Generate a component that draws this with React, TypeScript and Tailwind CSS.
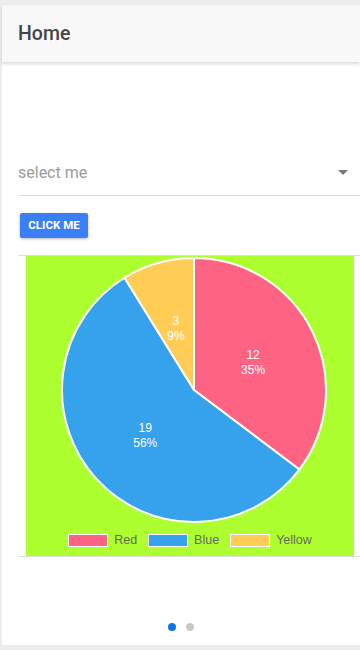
import React from "react";

const DATA = [
  { label: "Red", value: 12, color: "#ff6384" },
  { label: "Blue", value: 19, color: "#36a2eb" },
  { label: "Yellow", value: 3, color: "#ffcd56" },
];

const CX = 168;
const CY = 134;
const R = 132;

function pt(deg: number, r: number) {
  const a = (deg * Math.PI) / 180;
  return [CX + r * Math.sin(a), CY - r * Math.cos(a)];
}

function PieChart() {
  const total = DATA.reduce((s, d) => s + d.value, 0);
  let start = 0;
  const slices = DATA.map((d) => {
    const sweep = (d.value / total) * 360;
    const end = start + sweep;
    const [x1, y1] = pt(start, R);
    const [x2, y2] = pt(end, R);
    const [lx, ly] = pt(start + sweep / 2, R / 2);
    const large = sweep > 180 ? 1 : 0;
    const path = `M${CX} ${CY} L${x1} ${y1} A${R} ${R} 0 ${large} 1 ${x2} ${y2} Z`;
    start = end;
    return { ...d, path, lx, ly, pct: Math.round((d.value / total) * 100) };
  });

  return (
    <svg width="328" height="272" viewBox="0 0 328 272" className="block">
      {slices.map((s) => (
        <path key={s.label} d={s.path} fill={s.color} stroke="#fff" strokeWidth="2" strokeLinejoin="round" />
      ))}
      {slices.map((s) => (
        <g key={s.label + "t"} fill="#fff" fontSize="12" fontFamily="'Liberation Sans', Arial, sans-serif" textAnchor="middle">
          <text x={s.lx} y={s.ly - 2}>{s.value}</text>
          <text x={s.lx} y={s.ly + 13}>{s.pct}%</text>
        </g>
      ))}
    </svg>
  );
}

export default function App() {
  return (
    <div className="min-h-[650px] bg-[#ececec] pl-[2px] pt-[5px] pb-[5px] flex flex-col font-['Roboto',sans-serif]">
      <header className="h-[57px] bg-[#f8f8f8] shadow-[0_2px_3px_rgba(0,0,0,0.15)] flex items-center px-4 relative z-10">
        <h1 className="text-[19.5px] font-medium text-[#454545]">Home</h1>
      </header>

      <main className="flex-1 bg-white flex flex-col pl-4">
        <div className="mt-[88px] h-[46px] border-b border-[#dcdcdc] flex items-center justify-between pr-3">
          <span className="text-[16px] text-[#9a9a9a]">select me</span>
          <span className="w-0 h-0 border-l-[5px] border-r-[5px] border-t-[5px] border-l-transparent border-r-transparent border-t-[#777]" />
        </div>

        <button className="mt-[17px] ml-[2px] w-[68px] h-[25px] rounded-[2px] bg-[#3a7ff5] text-white text-[11.5px] font-bold uppercase shadow-[0_1px_3px_rgba(0,0,0,0.3)] self-start">
          Click me
        </button>

        <div className="mt-[17px] border-t border-b border-[#dedede] pl-2 pr-[6px]">
          <div className="bg-[#adff2f] h-[300px] flex flex-col">
            <PieChart />
            <div className="flex justify-center gap-[11px] mt-[6px] text-[12.5px] leading-[13px] text-[#666] font-['Liberation_Sans',Arial,sans-serif]">
              {DATA.map((d) => (
                <div key={d.label} className="flex items-center gap-[6px]">
                  <span className="w-[40px] h-[13px] border border-white" style={{ backgroundColor: d.color }} />
                  <span>{d.label}</span>
                </div>
              ))}
            </div>
          </div>
        </div>

        <div className="mt-[66px] flex justify-center gap-[10px] pr-4">
          <span className="w-2 h-2 rounded-full bg-[#0a74e8]" />
          <span className="w-2 h-2 rounded-full bg-[#c8c8c8]" />
        </div>
      </main>
    </div>
  );
}
